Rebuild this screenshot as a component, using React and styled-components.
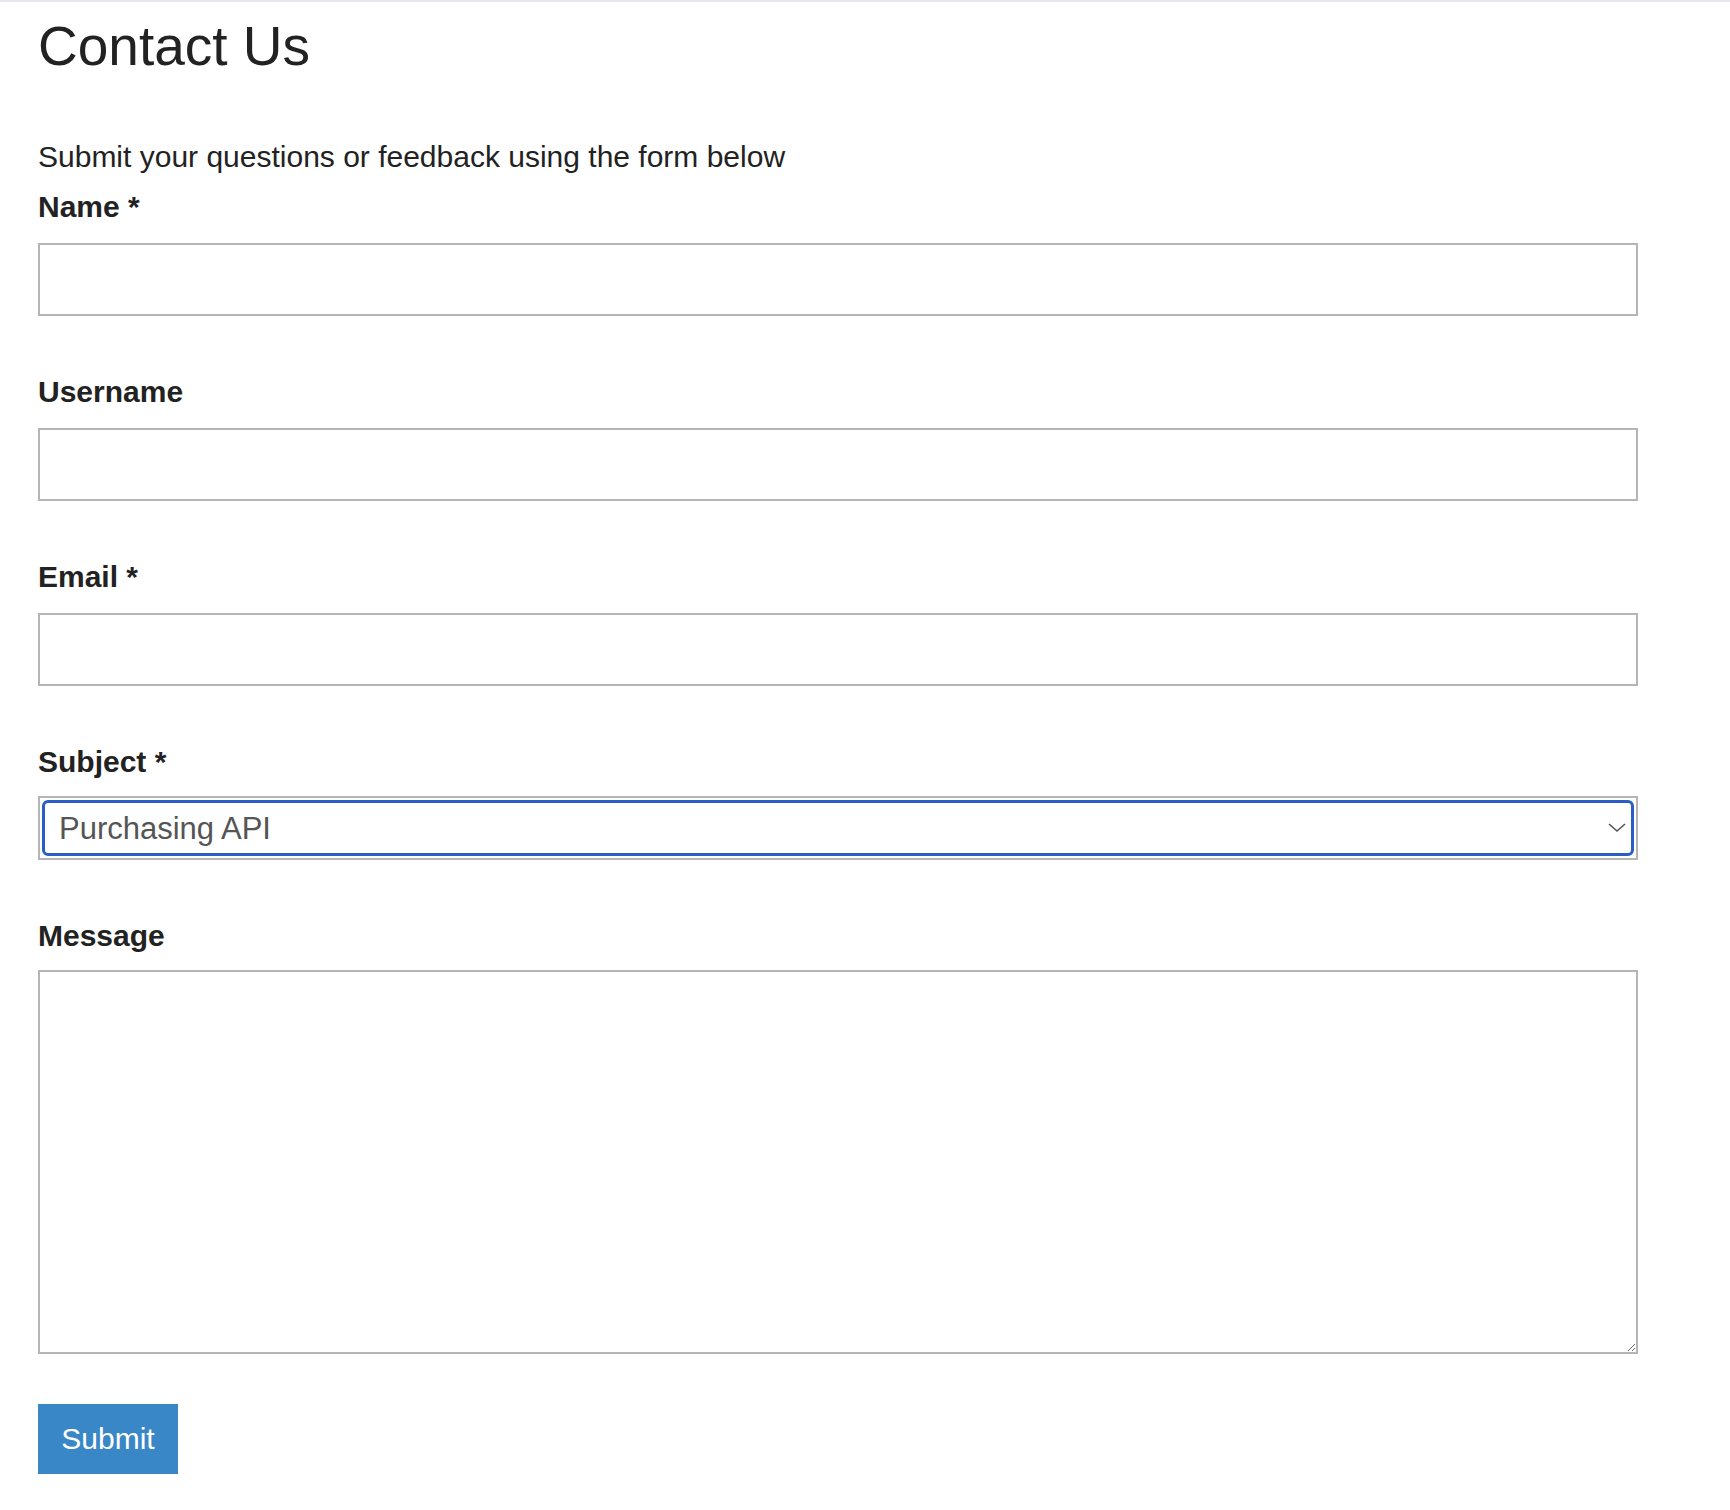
import React from 'react';
import styled, { createGlobalStyle } from 'styled-components';

const GlobalStyle = createGlobalStyle`
  body {
    margin: 0;
    background: #fff;
    font-family: "Liberation Sans", Arial, sans-serif;
    color: #262626;
  }
`;

const Page = styled.div`
  border-top: 2px solid #e4e6f0;
  padding: 12px 92px 40px 38px;
`;

const Title = styled.h1`
  margin: 0;
  font-size: 55px;
  line-height: 64px;
  font-weight: 400;
  color: #222;
`;

const Intro = styled.p`
  margin: 61px 0 14px;
  font-size: 30px;
  line-height: 36px;
  color: #222;
`;

const Form = styled.form`
  display: flex;
  flex-direction: column;
  align-items: stretch;
`;

const Field = styled.div`
  display: flex;
  flex-direction: column;
  gap: ${({ tight }) => (tight ? '16px' : '18px')};
  margin-bottom: 58px;
`;

const Label = styled.label`
  font-size: 30px;
  line-height: 36px;
  font-weight: 700;
  color: #222;
`;

const Input = styled.input`
  box-sizing: border-box;
  height: 73px;
  width: 100%;
  border: 2px solid #b5b5b5;
  border-radius: 0;
  outline: none;
  font-size: 30px;
  padding: 0 16px;
  font-family: inherit;
`;

const SelectFrame = styled.div`
  position: relative;
  box-sizing: border-box;
  height: 64px;
  border: 2px solid #b5b5b5;
  padding: 2px;
`;

const Select = styled.select`
  box-sizing: border-box;
  appearance: none;
  width: 100%;
  height: 100%;
  border: 3px solid #2a5ec6;
  border-radius: 6px;
  background: #fff;
  outline: none;
  font-family: inherit;
  font-size: 31px;
  color: #555;
  padding: 0 14px;
`;

const Chevron = styled.svg`
  position: absolute;
  right: 10px;
  top: 50%;
  transform: translateY(-50%);
  pointer-events: none;
`;

const TextArea = styled.textarea`
  box-sizing: border-box;
  height: 384px;
  width: 100%;
  border: 2px solid #b5b5b5;
  border-radius: 0;
  outline: none;
  font-family: inherit;
  font-size: 30px;
  padding: 10px 16px;
  resize: vertical;
`;

const SubmitButton = styled.button`
  align-self: flex-start;
  width: 140px;
  height: 70px;
  margin-top: -8px;
  border: none;
  border-radius: 0;
  background: #3a87c8;
  color: #fff;
  font-family: inherit;
  font-size: 30px;
  cursor: pointer;
`;

export default function App() {
  return (
    <Page>
      <GlobalStyle />
      <Title>Contact Us</Title>
      <Intro>Submit your questions or feedback using the form below</Intro>
      <Form onSubmit={(e) => e.preventDefault()}>
        <Field>
          <Label>Name *</Label>
          <Input type="text" />
        </Field>
        <Field>
          <Label>Username</Label>
          <Input type="text" />
        </Field>
        <Field>
          <Label>Email *</Label>
          <Input type="email" />
        </Field>
        <Field tight>
          <Label>Subject *</Label>
          <SelectFrame>
            <Select defaultValue="Purchasing API">
              <option>Purchasing API</option>
              <option>General</option>
            </Select>
            <Chevron width="18" height="10" viewBox="0 0 18 10">
              <path d="M1 1l8 7 8-7" fill="none" stroke="#555" strokeWidth="1.6" />
            </Chevron>
          </SelectFrame>
        </Field>
        <Field tight>
          <Label>Message</Label>
          <TextArea />
        </Field>
        <SubmitButton type="submit">Submit</SubmitButton>
      </Form>
    </Page>
  );
}
